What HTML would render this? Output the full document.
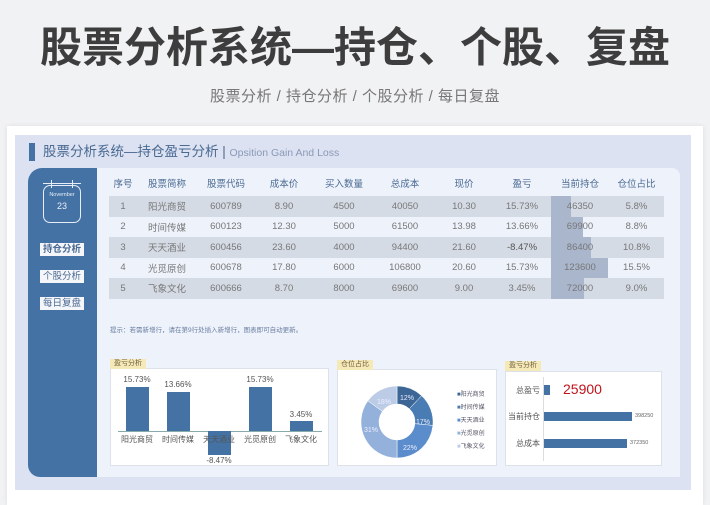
<!DOCTYPE html>
<html><head><meta charset="utf-8"><style>
*{margin:0;padding:0;box-sizing:border-box}
body{width:710px;height:505px;background:#f1f2f4;font-family:"Liberation Sans","Noto Sans CJK SC",sans-serif;position:relative;overflow:hidden;color:#555}
.abs{position:absolute}
h1{position:absolute;left:0;width:710px;top:22px;text-align:center;font-size:42px;font-weight:bold;color:#3d3d3d;line-height:52px}
.sub{position:absolute;left:0;width:710px;top:87px;text-align:center;font-size:15px;color:#777;line-height:20px;letter-spacing:0.5px}
table{border-collapse:collapse;font-size:9.5px;color:#777}
td,th{height:20.5px;text-align:center;font-weight:normal}
th{color:#4a6a92;height:26px}
tr.g td{background:#d5dbe5}
tr.w td{background:#eef2fb}
.btn{position:absolute;left:40px;width:44px;height:13px;background:#f4f6fa;color:#4a6a92;font-size:9.5px;text-align:center;line-height:13px}
.tag{position:absolute;background:#f6e9b8;font-size:7px;color:#6a5a3a;height:10px;line-height:10px;padding:0 4px}
.box{position:absolute;background:#fff;border:1px solid #dde2ea}
.bar{position:absolute;background:#4472a4}
.sm{position:absolute;font-size:8px;color:#555;text-align:center}
</style></head><body>
<h1>股票分析系统—持仓、个股、复盘</h1>
<div class="sub">股票分析 / 持仓分析 / 个股分析 / 每日复盘</div>
<div class="abs" style="left:7px;top:126px;width:696px;height:379px;background:#fff;box-shadow:0 0 4px #ddd"></div>
<div class="abs" style="left:15px;top:135px;width:676px;height:355px;background:#dce2f1"></div>
<div class="abs" style="left:29px;top:143px;width:6px;height:18px;background:#4472a4"></div>
<div class="abs" style="left:43px;top:143px;font-size:13.5px;color:#4a6a92;line-height:18px">股票分析系统—持仓盈亏分析 | <span style="font-size:10.5px;color:#8a9ab8">Opsition Gain And Loss</span></div>
<div class="abs" style="left:28px;top:168px;width:652px;height:309px;background:#eef2fb;border-radius:14px 8px 0 12px"></div>
<div class="abs" style="left:28px;top:168px;width:69px;height:309px;background:#4472a4;border-radius:14px 0 0 12px"></div>
<div class="abs" style="left:43px;top:185px;width:38px;height:38px;border:1px solid #e8eef8;border-radius:7px;color:#e8eef8;text-align:center">
<div style="font-size:5.5px;margin-top:6px">November</div><div style="font-size:9px;margin-top:3px">23</div></div>
<div class="abs" style="left:51px;top:180px;width:1px;height:8px;background:#e8eef8"></div>
<div class="abs" style="left:72px;top:180px;width:1px;height:8px;background:#e8eef8"></div>
<div class="abs" style="left:43px;top:183px;width:38px;height:1px;background:#e8eef8"></div>
<div class="btn" style="top:243px;font-weight:bold">持仓分析</div>
<div class="btn" style="top:270px">个股分析</div>
<div class="btn" style="top:297px">每日复盘</div>
<table class="abs" style="left:109px;top:170px;width:555px">
<tr><th style="width:28px">序号</th><th style="width:60px">股票简称</th><th style="width:58px">股票代码</th><th style="width:58px">成本价</th><th style="width:62px">买入数量</th><th style="width:60px">总成本</th><th style="width:58px">现价</th><th style="width:58px">盈亏</th><th style="width:58px">当前持仓</th><th>仓位占比</th></tr>
<tr class="g"><td>1</td><td>阳光商贸</td><td>600789</td><td>8.90</td><td>4500</td><td>40050</td><td>10.30</td><td>15.73%</td><td style="background:linear-gradient(90deg,#a9b6cc 0 20px,#d5dbe5 20px)">46350</td><td>5.8%</td></tr>
<tr class="w"><td>2</td><td>时间传媒</td><td>600123</td><td>12.30</td><td>5000</td><td>61500</td><td>13.98</td><td>13.66%</td><td style="background:linear-gradient(90deg,#a9b6cc 0 32px,#eef2fb 32px)">69900</td><td>8.8%</td></tr>
<tr class="g"><td>3</td><td>天天酒业</td><td>600456</td><td>23.60</td><td>4000</td><td>94400</td><td>21.60</td><td style="color:#555">-8.47%</td><td style="background:linear-gradient(90deg,#a9b6cc 0 40px,#d5dbe5 40px)">86400</td><td>10.8%</td></tr>
<tr class="w"><td>4</td><td>光觅原创</td><td>600678</td><td>17.80</td><td>6000</td><td>106800</td><td>20.60</td><td>15.73%</td><td style="background:linear-gradient(90deg,#a9b6cc 0 57px,#eef2fb 57px)">123600</td><td>15.5%</td></tr>
<tr class="g"><td>5</td><td>飞象文化</td><td>600666</td><td>8.70</td><td>8000</td><td>69600</td><td>9.00</td><td>3.45%</td><td style="background:linear-gradient(90deg,#a9b6cc 0 33px,#d5dbe5 33px)">72000</td><td>9.0%</td></tr>
</table>
<div class="abs" style="left:110px;top:324px;font-size:6.5px;color:#6a7fa0">提示：若需新增行，请在第9行处插入新增行，图表即可自动更新。</div>
<div class="box" style="left:110px;top:368px;width:219px;height:98px"></div>
<div class="tag" style="left:110px;top:359px">盈亏分析</div>
<div class="abs" style="left:118px;top:431px;width:204px;height:1px;background:#8aa"></div>
<div class="bar" style="left:126px;top:387px;width:23px;height:44px"></div>
<div class="bar" style="left:167px;top:392px;width:23px;height:39px"></div>
<div class="bar" style="left:208px;top:431px;width:23px;height:24px"></div>
<div class="bar" style="left:249px;top:387px;width:23px;height:44px"></div>
<div class="bar" style="left:290px;top:421px;width:23px;height:10px"></div>
<div class="sm" style="left:118px;top:375px;width:38px">15.73%</div>
<div class="sm" style="left:159px;top:380px;width:38px">13.66%</div>
<div class="sm" style="left:200px;top:456px;width:38px">-8.47%</div>
<div class="sm" style="left:241px;top:375px;width:38px">15.73%</div>
<div class="sm" style="left:282px;top:410px;width:38px">3.45%</div>
<div class="sm" style="left:117px;top:434px;width:40px">阳光商贸</div>
<div class="sm" style="left:158px;top:434px;width:40px">时间传媒</div>
<div class="sm" style="left:199px;top:434px;width:40px">天天酒业</div>
<div class="sm" style="left:240px;top:434px;width:40px">光觅原创</div>
<div class="sm" style="left:281px;top:434px;width:40px">飞象文化</div>
<div class="box" style="left:337px;top:369px;width:160px;height:97px"></div>
<div class="tag" style="left:337px;top:360px">仓位占比</div>
<svg class="abs" style="left:361px;top:386px" width="72" height="72" viewBox="-36 -36 72 72">
<g stroke="#fff" stroke-width="0.5">
<path d="M0 -36 A36 36 0 0 1 24.6 -26.3 L12.3 -13.2 A18 18 0 0 0 0 -18Z" fill="#3c6696"/>
<path d="M24.6 -26.3 A36 36 0 0 1 35.9 3.4 L17.9 1.7 A18 18 0 0 0 12.3 -13.2Z" fill="#4a7cb4"/>
<path d="M35.9 3.4 A36 36 0 0 1 0 36 L0 18 A18 18 0 0 0 17.9 1.7Z" fill="#5b8dcc"/>
<path d="M0 36 A36 36 0 0 1 -29.1 -21.2 L-14.6 -10.6 A18 18 0 0 0 0 18Z" fill="#93b1da"/>
<path d="M-29.1 -21.2 A36 36 0 0 1 0 -36 L0 -18 A18 18 0 0 0 -14.6 -10.6Z" fill="#bccce6"/>
</g>
<g fill="#eef" font-size="7" font-family="Liberation Sans"><text x="3" y="-22">12%</text><text x="19" y="2">17%</text><text x="6" y="28">22%</text><text x="-33" y="10">31%</text><text x="-20" y="-18">18%</text></g>
</svg>
<div class="abs" style="left:457px;top:389px;font-size:6px;color:#556;line-height:13px">
<div><span style="color:#3c6696">■</span>阳光商贸</div><div><span style="color:#4a7cb4">■</span>时间传媒</div><div><span style="color:#5b8dcc">■</span>天天酒业</div><div><span style="color:#93b1da">■</span>光觅原创</div><div><span style="color:#bccce6">■</span>飞象文化</div></div>
<div class="box" style="left:505px;top:371px;width:157px;height:95px"></div>
<div class="tag" style="left:505px;top:361px">盈亏分析</div>
<div class="abs" style="left:543px;top:377px;width:1px;height:84px;background:#ddd"></div>
<div class="sm" style="left:504px;top:385px;width:36px;text-align:right">总盈亏</div>
<div class="sm" style="left:504px;top:411px;width:36px;text-align:right">当前持仓</div>
<div class="sm" style="left:504px;top:438px;width:36px;text-align:right">总成本</div>
<div class="bar" style="left:544px;top:385px;width:6px;height:10px"></div>
<div class="abs" style="left:563px;top:381px;font-size:14px;color:#c0141c">25900</div>
<div class="bar" style="left:544px;top:412px;width:88px;height:9px"></div>
<div class="abs" style="left:635px;top:413px;font-size:5.5px;color:#666">398250</div>
<div class="bar" style="left:544px;top:439px;width:83px;height:9px"></div>
<div class="abs" style="left:630px;top:440px;font-size:5.5px;color:#666">372350</div>
</body></html>
